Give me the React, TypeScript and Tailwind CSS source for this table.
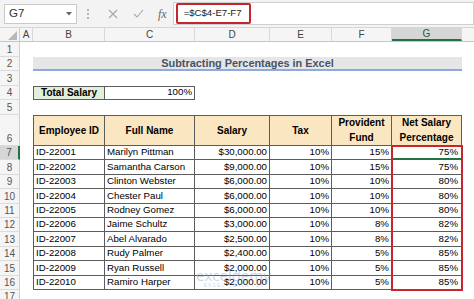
import type { ReactNode } from 'react';

const ROWS = [
  ['ID-22001', 'Marilyn Pittman', '$30,000.00', '10%', '15%', '75%'],
  ['ID-22002', 'Samantha Carson', '$9,000.00', '10%', '15%', '75%'],
  ['ID-22003', 'Clinton Webster', '$6,000.00', '10%', '10%', '80%'],
  ['ID-22004', 'Chester Paul', '$6,000.00', '10%', '10%', '80%'],
  ['ID-22005', 'Rodney Gomez', '$6,000.00', '10%', '10%', '80%'],
  ['ID-22006', 'Jaime Schultz', '$3,000.00', '10%', '8%', '82%'],
  ['ID-22007', 'Abel Alvarado', '$2,500.00', '10%', '8%', '82%'],
  ['ID-22008', 'Rudy Palmer', '$2,400.00', '10%', '5%', '85%'],
  ['ID-22009', 'Ryan Russell', '$2,000.00', '10%', '5%', '85%'],
  ['ID-22010', 'Ramiro Harper', '$2,000.00', '10%', '5%', '85%'],
];

const COLS = [
  { id: 'A', w: 'w-[13px]' },
  { id: 'B', w: 'w-[72px]' },
  { id: 'C', w: 'w-[90px]' },
  { id: 'D', w: 'w-[75px]' },
  { id: 'E', w: 'w-[62px]' },
  { id: 'F', w: 'w-[60px]' },
  { id: 'G', w: 'w-[70px]' },
];

// row number on the left edge
function RowNum({ n, active }: { n: number; active?: boolean }) {
  return (
    <div
      className={`w-[20px] shrink-0 flex items-end justify-center pb-[1px] text-[10px] leading-none text-[#555] border-b border-[#dcdcdc] ${
        active ? 'bg-[#d6d6d6] border-r-2 border-r-[#217346]' : 'bg-[#f5f5f5] border-r border-r-[#cfcfcf]'
      }`}
    >
      {n}
    </div>
  );
}

function Row({ n, h, active, children }: { n: number; h: string; active?: boolean; children?: ReactNode }) {
  return (
    <div className={`flex ${h}`}>
      <RowNum n={n} active={active} />
      <div className="w-[13px] shrink-0" />
      {children}
    </div>
  );
}

const cell = 'shrink-0 flex items-center px-[2px] border-r border-b border-[#5c5c5c] text-[9.7px] text-black';

export default function App() {
  return (
    <div className="relative w-[474px] h-[299px] overflow-hidden bg-white font-[family-name:Liberation_Sans,Arial,sans-serif]">
      {/* formula bar */}
      <div className="h-[28px] flex items-center bg-[#f3f3f3] border-b border-[#d6d6d6]">
        <div className="ml-[4px] w-[73px] h-[20px] bg-white border border-[#cacaca] flex items-center pl-[4px] pr-[4px] text-[11.5px] text-[#333]">
          <span>G7</span>
          <svg className="ml-auto" width="6" height="4" viewBox="0 0 6 4">
            <polygon points="0,0 6,0 3,3.5" fill="#666" />
          </svg>
        </div>
        <div className="ml-[10px] flex flex-col gap-[2px]">
          <span className="w-[2px] h-[2px] bg-[#b5b5b5]" />
          <span className="w-[2px] h-[2px] bg-[#b5b5b5]" />
          <span className="w-[2px] h-[2px] bg-[#b5b5b5]" />
        </div>
        <svg className="ml-[19px]" width="10" height="10" viewBox="0 0 10 10">
          <path d="M1 1 L9 9 M9 1 L1 9" stroke="#a8a8a8" strokeWidth="1.1" />
        </svg>
        <svg className="ml-[15px]" width="11" height="9" viewBox="0 0 11 9">
          <path d="M1 5 L4 8 L10 1" stroke="#a8a8a8" strokeWidth="1.1" fill="none" />
        </svg>
        <span className="ml-[14px] font-[family-name:Liberation_Serif,serif] italic text-[12px] text-[#666]">fx</span>
        <div className="ml-[6px] flex-1 h-[23px] bg-white border border-[#cfcfcf] flex items-center">
          <div className="ml-[2px] w-[75px] h-[21px] border-2 border-[#c4262e] rounded-[2px] flex items-center pl-[6px] text-[9.6px] text-[#222]">
            =$C$4-E7-F7
          </div>
        </div>
      </div>

      {/* column headers */}
      <div className="flex h-[14px] bg-[#f5f5f5] border-b border-[#c6c6c6] text-[10px] text-[#444]">
        <div className="w-[20px] shrink-0 relative border-r border-[#cfcfcf]">
          <svg className="absolute right-[2px] bottom-[1px]" width="9" height="9" viewBox="0 0 9 9">
            <polygon points="9,0 9,9 0,9" fill="#b8b8b8" />
          </svg>
        </div>
        {COLS.map((c) => (
          <div
            key={c.id}
            className={`${c.w} shrink-0 flex items-center justify-center border-r border-[#d8d8d8] ${
              c.id === 'G' ? 'bg-[#d6d6d6] border-b-2 border-b-[#217346] text-[#1e5c3a]' : ''
            }`}
          >
            {c.id}
          </div>
        ))}
        <div className="flex-1" />
      </div>

      <Row n={1} h="h-[14.5px]" />
      <Row n={2} h="h-[14.5px]">
        <div className="w-[429px] shrink-0 bg-[#e7e6e6] border-b-2 border-[#8eaadb] flex items-center justify-center font-bold text-[10.9px] text-[#44546a]">
          Subtracting Percentages in Excel
        </div>
      </Row>
      <Row n={3} h="h-[14.5px]" />
      <Row n={4} h="h-[14.5px]">
        <div className={`${cell} w-[72px] border-l border-t bg-[#e2efda] justify-center font-bold text-[10px]`}>Total Salary</div>
        <div className={`${cell} w-[90px] border-t justify-end`}>100%</div>
      </Row>
      <Row n={5} h="h-[14.5px]" />
      <Row n={6} h="h-[31.5px]">
        {['Employee ID', 'Full Name', 'Salary', 'Tax', 'Provident Fund', 'Net Salary Percentage'].map((t, i) => (
          <div
            key={t}
            className={`${cell} ${COLS[i + 1].w} ${i === 0 ? 'border-l' : ''} border-t bg-[#fbe6c2] justify-center text-center font-bold text-[10px] leading-[15px]`}
          >
            {t === 'Provident Fund' ? (
              <span>Provident<br />Fund</span>
            ) : t === 'Net Salary Percentage' ? (
              <span>Net Salary<br />Percentage</span>
            ) : (
              t
            )}
          </div>
        ))}
      </Row>
      {ROWS.map((r, i) => (
        <Row key={r[0]} n={7 + i} h="h-[14.4px]" active={i === 0}>
          <div className={`${cell} w-[72px] border-l`}>{r[0]}</div>
          <div className={`${cell} w-[90px]`}>{r[1]}</div>
          <div className={`${cell} w-[75px] justify-end`}>{r[2]}</div>
          <div className={`${cell} w-[62px] justify-end`}>{r[3]}</div>
          <div className={`${cell} w-[60px] justify-end`}>{r[4]}</div>
          <div className={`${cell} w-[70px] justify-end pr-[3px] ${i === 0 ? 'border-b-2 border-b-[#217346]' : ''}`}>{r[5]}</div>
        </Row>
      ))}
      <Row n={17} h="h-[14.5px]" />

      {/* highlight box around G7:G16 */}
      <div className="absolute left-[391px] top-[145px] w-[72px] h-[146px] border-2 border-[#c9252c] pointer-events-none" />

      {/* watermark */}
      <div className="absolute left-[196px] top-[268px] flex flex-col items-center opacity-40 pointer-events-none">
        <span className="text-[15px] leading-none text-[#7d9cc4] font-[family-name:Open_Sans,sans-serif]">exceldemy</span>
        <span className="text-[5px] leading-none tracking-[1px] text-[#7d9cc4]">EXCEL · DATA · BI</span>
      </div>
    </div>
  );
}
